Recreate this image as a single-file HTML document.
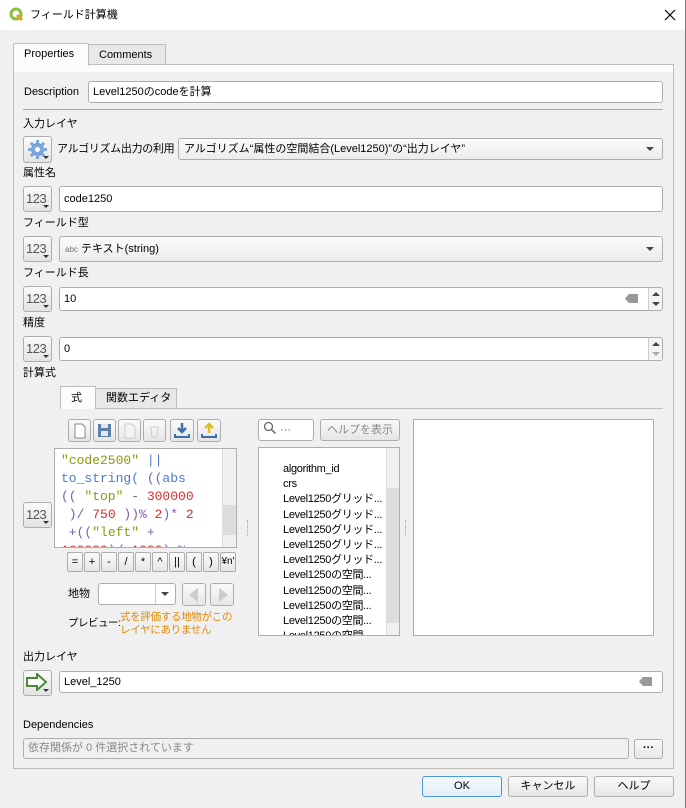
<!DOCTYPE html>
<html><head><meta charset="utf-8"><style>
*{box-sizing:border-box;margin:0;padding:0}
body{width:686px;height:808px;background:#f0f0f0;font-family:"Liberation Sans","Noto Sans CJK JP",sans-serif;font-size:11px;color:#000;position:relative;overflow:hidden}
.a{position:absolute}
.lbl{position:absolute;line-height:14px;white-space:nowrap}
.inp{position:absolute;background:#fff;border:1px solid #adadad;border-radius:3px;padding-left:4px;line-height:20px;white-space:nowrap;overflow:hidden}
.cmb{position:absolute;background:linear-gradient(#fbfbfb,#ececec);border:1px solid #adadad;border-radius:3px;padding-left:5px;line-height:20px;white-space:nowrap}
.cmb:after{content:"";position:absolute;right:8px;top:50%;margin-top:-2px;border-left:4px solid transparent;border-right:4px solid transparent;border-top:4px solid #444}
.btn{position:absolute;background:linear-gradient(#fafafa,#e6e6e6);border:1px solid #adadad;border-radius:3px;text-align:center}
.b123{position:absolute;width:29px;height:26px;background:linear-gradient(#fafafa,#e4e4e4);border:1px solid #adadad;border-radius:3px;font-size:13px;color:#555;font-family:"Liberation Sans Narrow","Liberation Sans",sans-serif;line-height:23px;padding-left:2px;text-align:left;letter-spacing:-0.5px}
.b123:after{content:"";position:absolute;right:2px;bottom:3px;border-left:3px solid transparent;border-right:3px solid transparent;border-top:3px solid #333}
.clr{position:absolute;width:13px;height:9px;background:#999;right:10px;top:50%;margin-top:-5px;clip-path:polygon(30% 0,100% 0,100% 100%,30% 100%,0 50%)}
.spin{position:absolute;right:0;top:0;width:14px;height:100%;border-left:1px solid #ccc;background:#f4f4f4}
.op{position:absolute;top:552px;width:16px;height:20px;background:linear-gradient(#fafafa,#e6e6e6);border:1px solid #adadad;border-radius:2px;text-align:center;line-height:18px;font-size:11px}
.tb{position:absolute;top:419px;width:23px;height:23px;background:linear-gradient(#fafafa,#e6e6e6);border:1px solid #adadad;border-radius:3px}
</style></head><body>
<div class="a" style="left:0;top:0;width:686px;height:31px;background:#fff;border-bottom:1px solid #f0f0f0"></div>
<div class="a" style="left:685px;top:0;width:1px;height:808px;background:#777"></div>
<svg class="a" style="left:9px;top:7px" width="15" height="15" viewBox="0 0 15 15"><circle cx="7" cy="7" r="5" fill="none" stroke="#8dbf3f" stroke-width="3"/><path d="M8 8l5 5" stroke="#e8a020" stroke-width="3"/></svg>
<div class="lbl" style="left:30px;top:8px">フィールド計算機</div>
<svg class="a" style="left:664px;top:9px" width="12" height="12"><path d="M1 1l10 10M11 1L1 11" stroke="#000" stroke-width="1.2"/></svg>

<div class="a" style="left:13px;top:64px;width:661px;height:705px;border:1px solid #bdbdbd;background:#f0f0f0"></div>
<div class="a" style="left:14px;top:65px;width:659px;height:7px;background:#fcfcfc"></div>
<div class="a" style="left:13px;top:43px;width:76px;height:23px;border:1px solid #bdbdbd;border-bottom:none;background:#fcfcfc;border-radius:2px 2px 0 0"></div>
<div class="lbl" style="left:24px;top:47px">Properties</div>
<div class="a" style="left:88px;top:44px;width:78px;height:20px;border:1px solid #bdbdbd;border-bottom:none;background:#e8e8e8"></div>
<div class="lbl" style="left:99px;top:48px">Comments</div>

<div class="lbl" style="left:24px;top:85px">Description</div>
<div class="inp" style="left:88px;top:81px;width:575px;height:22px">Level1250のcodeを計算</div>
<div class="a" style="left:23px;top:109px;width:640px;height:1px;background:#a8a8a8"></div>

<div class="lbl" style="left:23px;top:117px">入力レイヤ</div>
<div class="b123" style="left:23px;top:136px;height:27px"></div>
<svg class="a" style="left:27px;top:139px" width="21" height="21" viewBox="0 0 21 21"><g fill="#7ea6d8" stroke="#4f7fbf" stroke-width=".8"><circle cx="10.5" cy="10.5" r="6"/><g stroke-width="3" stroke="#7ea6d8"><path d="M10.5 1v19M1 10.5h19M3.8 3.8l13.4 13.4M17.2 3.8L3.8 17.2"/></g></g><circle cx="10.5" cy="10.5" r="2.5" fill="#fff"/></svg>
<div class="lbl" style="left:57px;top:142px;letter-spacing:-0.3px">アルゴリズム出力の利用</div>
<div class="cmb" style="left:178px;top:138px;width:485px;height:22px">アルゴリズム“属性の空間結合(Level1250)”の“出力レイヤ”</div>

<div class="lbl" style="left:23px;top:166px">属性名</div>
<div class="b123" style="left:23px;top:186px">123</div>
<div class="inp" style="left:59px;top:186px;width:604px;height:26px;line-height:24px">code1250</div>

<div class="lbl" style="left:23px;top:216px">フィールド型</div>
<div class="b123" style="left:23px;top:236px">123</div>
<div class="cmb" style="left:59px;top:236px;width:604px;height:26px;line-height:24px"><span style="font-size:8px;color:#777">abc</span> テキスト(string)</div>

<div class="lbl" style="left:23px;top:266px">フィールド長</div>
<div class="b123" style="left:23px;top:286px">123</div>
<div class="inp" style="left:59px;top:287px;width:604px;height:24px;line-height:22px">10<div class="clr" style="right:24px"></div><div class="spin"><div class="a" style="left:3px;top:4px;border:4px solid transparent;border-bottom-color:#444;border-top:none"></div><div class="a" style="left:3px;top:14px;border:4px solid transparent;border-top-color:#444;border-bottom:none"></div></div></div>

<div class="lbl" style="left:23px;top:316px">精度</div>
<div class="b123" style="left:23px;top:336px">123</div>
<div class="inp" style="left:59px;top:337px;width:604px;height:24px;line-height:22px">0<div class="spin"><div class="a" style="left:3px;top:4px;border:4px solid transparent;border-bottom-color:#444;border-top:none"></div><div class="a" style="left:3px;top:14px;border:4px solid transparent;border-top-color:#aaa;border-bottom:none"></div></div></div>

<div class="lbl" style="left:23px;top:366px">計算式</div>
<div class="a" style="left:60px;top:408px;width:603px;height:1px;background:#bdbdbd"></div>
<div class="a" style="left:60px;top:386px;width:36px;height:23px;border:1px solid #bdbdbd;border-bottom:none;background:#fcfcfc"></div>
<div class="lbl" style="left:71px;top:391px">式</div>
<div class="a" style="left:95px;top:388px;width:82px;height:20px;border:1px solid #bdbdbd;border-bottom:none;background:#e8e8e8"></div>
<div class="lbl" style="left:106px;top:391px">関数エディタ</div>

<div class="tb" style="left:68px"><svg width="21" height="21"><path d="M6 4h7l3 3v11H6z" fill="#fff" stroke="#888"/></svg></div>
<div class="tb" style="left:93px"><svg width="21" height="21"><rect x="4" y="4" width="13" height="13" fill="#5b7fa6"/><rect x="7" y="4" width="7" height="4" fill="#dfe6ee"/><rect x="7" y="11" width="7" height="5" fill="#dfe6ee"/></svg></div>
<div class="tb" style="left:118px"><svg width="21" height="21"><path d="M6 4h7l3 3v11H6z" fill="#f4f4f4" stroke="#ccc"/></svg></div>
<div class="tb" style="left:143px"><svg width="21" height="21"><path d="M6 7h9M7 8l1 9h5l1-9" fill="none" stroke="#ccc"/></svg></div>
<div class="tb" style="left:170px;width:24px"><svg width="22" height="21"><path d="M11 3v9M7 8l4 4 4-4" stroke="#3a6fa8" stroke-width="2.5" fill="none"/><path d="M4 14v3h14v-3" stroke="#3a6fa8" stroke-width="2" fill="none"/></svg></div>
<div class="tb" style="left:197px;width:24px"><svg width="22" height="21"><path d="M11 13V5M7 8l4-4 4 4" stroke="#e0c020" stroke-width="2.5" fill="none"/><path d="M4 14v3h14v-3" stroke="#3a6fa8" stroke-width="2" fill="none"/></svg></div>

<div class="a" style="left:54px;top:448px;width:183px;height:100px;background:#fff;border:1px solid #adadad;overflow:hidden;font-family:'Liberation Mono',monospace;font-size:13px;line-height:18px;padding:3px 0 0 6px;color:#7a5cb0;white-space:pre"><span style="color:#8a9a10">"code2500"</span> <span style="color:#4a7ad0">||</span>
<span style="color:#4a7ad0">to_string(</span> ((<span style="color:#4a7ad0">abs</span>
(( <span style="color:#8a9a10">"top"</span> - <span style="color:#d03030">300000</span>
 )/ <span style="color:#d03030">750</span> ))% <span style="color:#d03030">2</span>)* <span style="color:#d03030">2</span>
 +((<span style="color:#8a9a10">"left"</span> +
<span style="color:#d03030">160000</span>)/ <span style="color:#d03030">1000</span>) %
<div class="a" style="left:167px;top:0;width:14px;height:98px;background:#f0f0f0;border-left:1px solid #ddd"><div class="a" style="left:0;top:56px;width:13px;height:30px;background:#ddd"></div></div></div>

<div class="op" style="left:67px">=</div><div class="op" style="left:84px">+</div><div class="op" style="left:101px">-</div><div class="op" style="left:118px">/</div><div class="op" style="left:135px">*</div><div class="op" style="left:152px">^</div><div class="op" style="left:169px">||</div><div class="op" style="left:186px">(</div><div class="op" style="left:203px">)</div><div class="op" style="left:220px;font-size:10px">¥n'</div>

<div class="lbl" style="left:68px;top:587px">地物</div>
<div class="inp" style="left:98px;top:583px;width:78px;height:22px"><div class="a" style="left:56px;top:0;width:1px;height:20px;background:#ccc"></div><div class="a" style="left:62px;top:8px;border:4px solid transparent;border-top-color:#444;border-bottom:none"></div></div>
<div class="btn" style="left:182px;top:583px;width:24px;height:23px"><div class="a" style="left:6px;top:4px;border:7px solid transparent;border-right:9px solid #ccc;border-left:none"></div></div>
<div class="btn" style="left:210px;top:583px;width:24px;height:23px"><div class="a" style="left:8px;top:4px;border:7px solid transparent;border-left:9px solid #ccc;border-right:none"></div></div>
<div class="lbl" style="left:68px;top:616px;font-size:10.5px;letter-spacing:-0.5px">プレビュー:</div>
<div class="lbl" style="left:120px;top:611px;color:#e08a00;line-height:13px;font-size:10.5px;letter-spacing:-0.3px">式を評価する地物がこの<br>レイヤにありません</div>

<div class="b123" style="left:23px;top:502px">123</div>

<div class="inp" style="left:258px;top:419px;width:56px;height:22px;color:#555"><svg width="14" height="14" style="vertical-align:-2px"><circle cx="5.5" cy="5.5" r="4" fill="none" stroke="#666" stroke-width="1.3"/><path d="M8.5 8.5l4 4" stroke="#666" stroke-width="1.5"/></svg> ···</div>
<div class="btn" style="left:320px;top:419px;width:80px;height:22px;line-height:20px;color:#888">ヘルプを表示</div>
<div class="a" style="left:258px;top:447px;width:142px;height:189px;background:#fff;border:1px solid #adadad;overflow:hidden;padding:14px 0 0 24px;font-size:11px;line-height:15.2px;color:#000;white-space:nowrap;letter-spacing:-0.3px">algorithm_id<br>crs<br>Level1250グリッド...<br>Level1250グリッド...<br>Level1250グリッド...<br>Level1250グリッド...<br>Level1250グリッド...<br>Level1250の空間...<br>Level1250の空間...<br>Level1250の空間...<br>Level1250の空間...<br>Level1250の空間...
<div class="a" style="left:127px;top:0;width:14px;height:187px;background:#f0f0f0;border-left:1px solid #ddd"><div class="a" style="left:0;top:40px;width:13px;height:135px;background:#ddd"></div></div></div>
<div class="a" style="left:247px;top:520px;width:1px;height:16px;border-left:1px dotted #aaa"></div>
<div class="a" style="left:405px;top:520px;width:1px;height:16px;border-left:1px dotted #aaa"></div>
<div class="a" style="left:413px;top:419px;width:241px;height:217px;background:#fff;border:1px solid #adadad"></div>

<div class="lbl" style="left:23px;top:650px">出力レイヤ</div>
<div class="b123" style="left:23px;top:670px"></div>
<svg class="a" style="left:26px;top:673px" width="22" height="18" viewBox="0 0 22 18"><path d="M1 5h10V1l9 8-9 8v-4H1z" fill="#fff" stroke="#4a8a3a" stroke-width="2"/></svg>
<div class="inp" style="left:59px;top:671px;width:604px;height:22px">Level_1250<div class="clr"></div></div>

<div class="lbl" style="left:23px;top:718px">Dependencies</div>
<div class="inp" style="left:23px;top:738px;width:606px;height:21px;line-height:19px;background:#f0f0f0;color:#888">依存関係が 0 件選択されています</div>
<div class="btn" style="left:634px;top:739px;width:29px;height:20px;line-height:16px;font-weight:bold">···</div>

<div class="btn" style="left:422px;top:776px;width:80px;height:21px;line-height:19px;border-color:#4a9ad8;background:linear-gradient(#f4f9fd,#e4eef8)">OK</div>
<div class="btn" style="left:508px;top:776px;width:80px;height:21px;line-height:19px">キャンセル</div>
<div class="btn" style="left:594px;top:776px;width:80px;height:21px;line-height:19px">ヘルプ</div>
</body></html>
